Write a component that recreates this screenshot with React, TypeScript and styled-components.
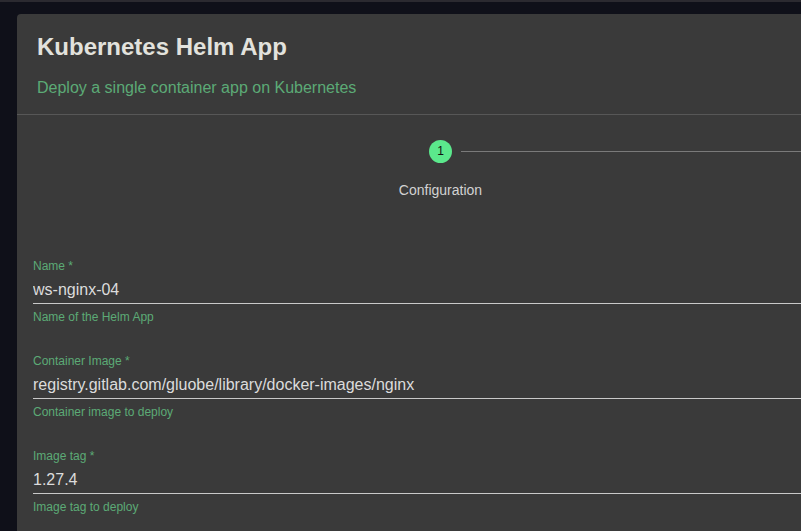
import React from 'react';
import styled, { createGlobalStyle } from 'styled-components';

const GlobalStyle = createGlobalStyle`
  html, body {
    margin: 0;
    padding: 0;
    background: #0f1019;
    overflow: hidden;
    font-family: "Liberation Sans", Arial, sans-serif;
  }
`;

type FieldData = {
  label: string;
  value: string;
  help: string;
};

const fields: FieldData[] = [
  { label: 'Name *', value: 'ws-nginx-04', help: 'Name of the Helm App' },
  {
    label: 'Container Image *',
    value: 'registry.gitlab.com/gluobe/library/docker-images/nginx',
    help: 'Container image to deploy',
  },
  { label: 'Image tag *', value: '1.27.4', help: 'Image tag to deploy' },
];

function App() {
  return (
    <>
      <GlobalStyle />
      <TopStrip />
      <Page>
        <Card>
          <Header>
            <Title>Kubernetes Helm App</Title>
            <Subtitle>Deploy a single container app on Kubernetes</Subtitle>
          </Header>
          <Stepper>
            <Step>
              <StepIcon>1</StepIcon>
              <StepLabel>Configuration</StepLabel>
            </Step>
            <Connector />
          </Stepper>
          <Form>
            {fields.map((f) => (
              <Field key={f.label}>
                <Label>{f.label}</Label>
                <InputRow>
                  <Input defaultValue={f.value} />
                </InputRow>
                <Help>{f.help}</Help>
              </Field>
            ))}
          </Form>
        </Card>
      </Page>
    </>
  );
}

export default App;

const TopStrip = styled.div`
  height: 2px;
  background: #2b2a30;
`;

const Page = styled.div`
  padding: 12px 0 0 17px;
`;

const Card = styled.div`
  width: 1000px;
  min-height: 540px;
  background: #3a3a3a;
  border-radius: 4px 4px 0 0;
`;

const Header = styled.div`
  padding: 19px 20px 16px;
  border-bottom: 1px solid #575757;
`;

const Title = styled.h1`
  margin: 0;
  font-size: 24px;
  line-height: 28px;
  font-weight: 700;
  color: #e2e2dd;
`;

const Subtitle = styled.p`
  margin: 17px 0 0;
  font-size: 16px;
  line-height: 20px;
  color: #5caa76;
`;

const Stepper = styled.div`
  display: flex;
  align-items: flex-start;
  padding: 25px 0 0 412px;
`;

const Step = styled.div`
  display: flex;
  flex-direction: column;
  align-items: center;
  width: 23px;
`;

const StepIcon = styled.div`
  width: 23px;
  height: 23px;
  border-radius: 50%;
  background: #5be88c;
  color: #111;
  font-size: 12px;
  line-height: 23px;
  text-align: center;
`;

const StepLabel = styled.div`
  margin-top: 18px;
  font-size: 14px;
  line-height: 18px;
  color: #d2d2d2;
  white-space: nowrap;
`;

const Connector = styled.div`
  flex: 1;
  margin: 11px 0 0 9px;
  border-top: 1px solid #7a7a7a;
`;

const Form = styled.div`
  display: flex;
  flex-direction: column;
  gap: 28px;
  padding: 59px 0 0 16px;
`;

const Field = styled.div`
  display: flex;
  flex-direction: column;
`;

const Label = styled.label`
  font-size: 12px;
  line-height: 16px;
  color: #5caa76;
`;

const InputRow = styled.div`
  padding: 6px 0 3px;
  border-bottom: 1px solid #c9c9c9;
`;

const Input = styled.input`
  display: block;
  width: 100%;
  box-sizing: border-box;
  margin: 0;
  padding: 0;
  border: none;
  outline: none;
  background: transparent;
  font-family: "Liberation Sans", Arial, sans-serif;
  font-size: 16px;
  line-height: 20px;
  height: 20px;
  color: #dcdcdc;
`;

const Help = styled.div`
  margin-top: 5px;
  font-size: 12px;
  line-height: 16px;
  color: #5caa76;
`;
